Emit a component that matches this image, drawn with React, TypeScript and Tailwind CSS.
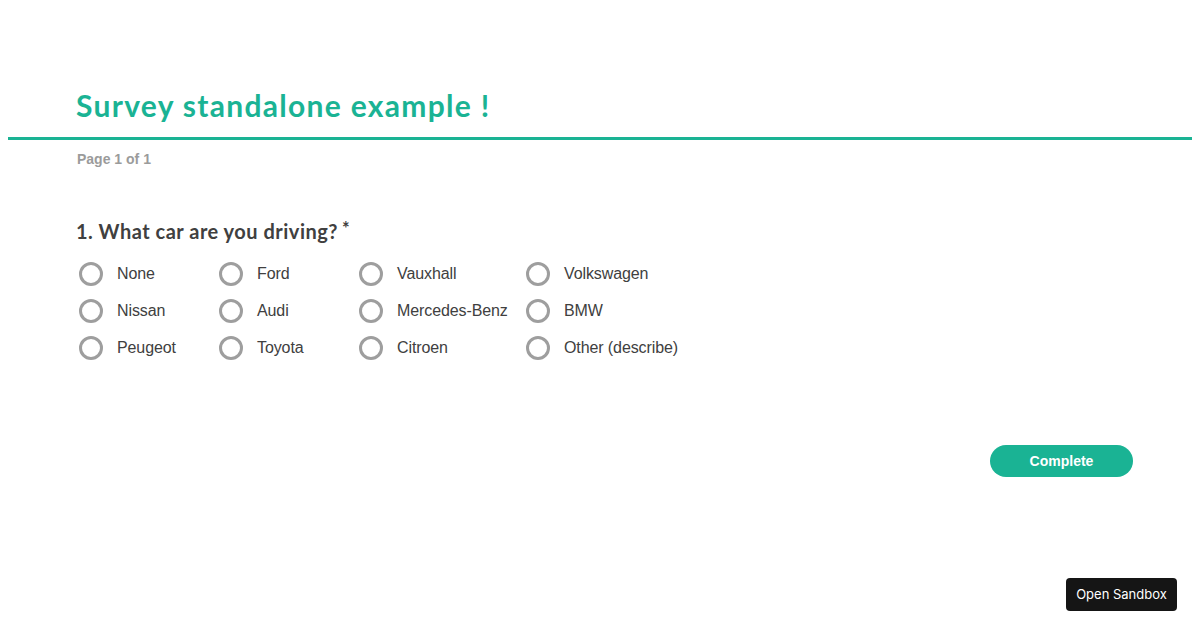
import { useState } from 'react';

const choices = [
  ['None', 'Ford', 'Vauxhall', 'Volkswagen'],
  ['Nissan', 'Audi', 'Mercedes-Benz', 'BMW'],
  ['Peugeot', 'Toyota', 'Citroen', 'Other (describe)'],
];

const Radio = ({ label, checked, onPick }: { label: string; checked: boolean; onPick: () => void }) => (
  <label className="flex items-center h-[37px] cursor-pointer" onClick={onPick}>
    <span className="w-6 h-6 rounded-full border-[3px] border-[#9e9e9e] flex items-center justify-center shrink-0">
      {checked && <span className="w-2.5 h-2.5 rounded-full bg-[#1ab394]" />}
    </span>
    <span className="ml-[14px] text-[16px] text-[#404040] whitespace-nowrap tracking-[-0.1px]">{label}</span>
  </label>
);

export default function App() {
  const [picked, setPicked] = useState('');

  return (
    <div className="relative w-[1200px] h-[630px] bg-white px-2 font-['Liberation_Sans',Arial,sans-serif]">
      {/* Header */}
      <div className="pt-[85px] border-b-[3px] border-[#1ab394]">
        <h3 className="pl-[68px] pb-[12px] text-[30px] leading-[40px] font-bold text-[#1ab394] tracking-[1.3px] font-['Lato','Open_Sans',sans-serif]">
          Survey standalone example !
        </h3>
      </div>
      <div className="pl-[69px] pt-[9px] text-[14px] font-bold text-[#9b9b9b]">Page 1 of 1</div>

      {/* Question */}
      <div className="pl-[68px] pt-[47px]">
        <h5 className="text-[20px] leading-[28px] font-bold text-[#404040] tracking-[0.5px] font-['Lato','Open_Sans',sans-serif]">
          1. What car are you driving?
          <sup className="ml-[4px] text-[18px] relative -top-[4px]">*</sup>
        </h5>
        <div className="mt-[10px] pl-[3px] grid grid-cols-[140px_140px_167px_auto] w-fit">
          {choices.flat().map((c) => (
            <Radio key={c} label={c} checked={picked === c} onPick={() => setPicked(c)} />
          ))}
        </div>
      </div>

      {/* Footer */}
      <div className="flex justify-end pr-[59px] mt-[79px]">
        <button className="w-[143px] h-8 rounded-full bg-[#1ab394] text-white text-[14px] font-bold">
          Complete
        </button>
      </div>

      <button className="absolute right-[23px] bottom-[19px] w-[111px] h-[33px] rounded bg-[#151515] text-white text-[13px] font-['Inter','Roboto',sans-serif]">
        Open Sandbox
      </button>
    </div>
  );
}
